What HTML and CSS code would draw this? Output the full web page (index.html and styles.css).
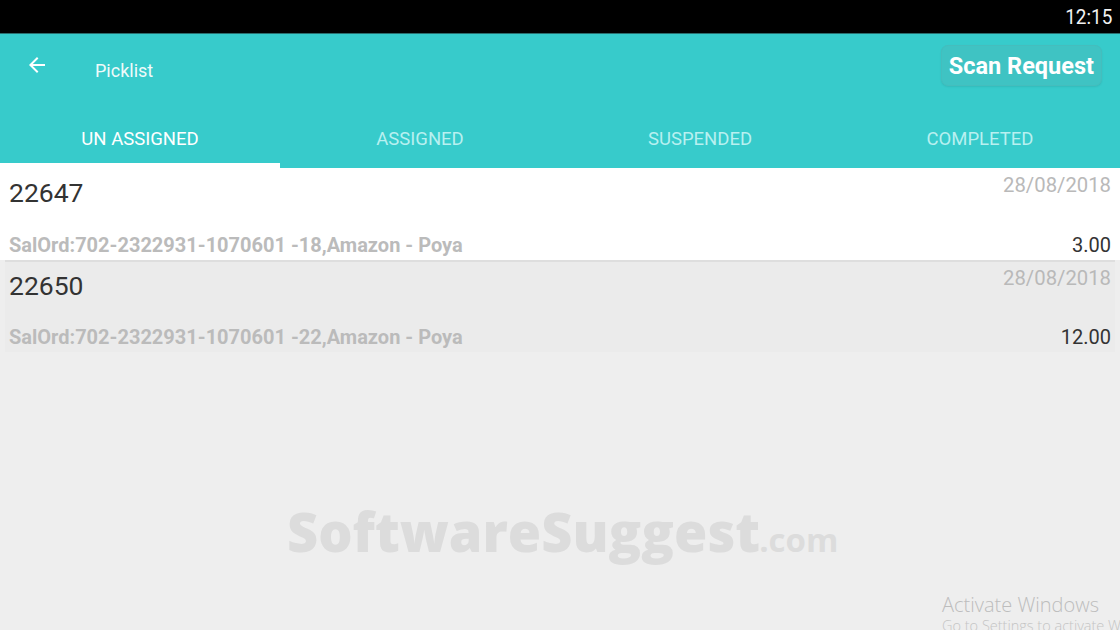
FILE: index.html
```html
<!DOCTYPE html>
<html>
<head>
<meta charset="utf-8">
<link rel="stylesheet" href="styles.css">
</head>
<body>
<div class="screen">
  <div class="statusbar"><span class="time">12:15</span></div>
  <div class="appbar">
    <div class="toolbar">
      <svg class="back" width="24" height="24" viewBox="0 0 24 24"><path d="M20 11H7.83l5.59-5.59L12 4l-8 8 8 8 1.41-1.41L7.83 13H20v-2z" fill="#fff"/></svg>
      <span class="title">Picklist</span>
      <span class="spacer"></span>
      <button class="scan">Scan Request</button>
    </div>
    <div class="tabs">
      <div class="tab active">UN ASSIGNED</div>
      <div class="tab">ASSIGNED</div>
      <div class="tab">SUSPENDED</div>
      <div class="tab">COMPLETED</div>
    </div>
  </div>
  <div class="list">
    <div class="item first">
      <div class="row top"><span class="num">22647</span><span class="date">28/08/2018</span></div>
      <div class="row bottom"><span class="desc">SalOrd:702-2322931-1070601 -18,Amazon - Poya</span><span class="qty">3.00</span></div>
    </div>
    <div class="item second">
      <div class="row top"><span class="num">22650</span><span class="date">28/08/2018</span></div>
      <div class="row bottom"><span class="desc">SalOrd:702-2322931-1070601 -22,Amazon - Poya</span><span class="qty">12.00</span></div>
    </div>
  </div>
  <div class="watermark">SoftwareSuggest<span class="com">.com</span></div>
  <div class="activate">
    <div class="a1">Activate Windows</div>
    <div class="a2">Go to Settings to activate Windows.</div>
  </div>
</div>
</body>
</html>
```
FILE: styles.css
```css
* { box-sizing: border-box; }
html, body { margin: 0; padding: 0; }
body { background: #eeeeee; font-family: Roboto, "Noto Sans", sans-serif; }
.screen { position: relative; width: 1120px; height: 630px; overflow: hidden; background: #eeeeee; }
.statusbar { height: 34px; background: #000; display: flex; justify-content: flex-end; align-items: center; padding-right: 8px; border-bottom: 1px solid #2a6f6f; }
.time { color: #f2f2f2; font-size: 21px; font-family: Roboto, sans-serif; transform: scaleX(0.9); transform-origin: right center; display: inline-block; margin-top: 1px; }
.appbar { background: #37cbcb; height: 134px; display: flex; flex-direction: column; }
.toolbar { height: 68px; display: flex; align-items: flex-start; padding: 0 18px 0 25px; }
.back { margin-top: 19px; }
.title { color: #effafa; font-size: 18px; margin-left: 46px; margin-top: 26px; }
.spacer { flex: 1; }
.scan { margin-top: 11px; height: 41px; padding: 0 7px; background: #3fc3c3; border: 1px solid #45bdbd; border-radius: 7px; color: #fff; font-family: Roboto, sans-serif; font-weight: 700; font-size: 23.5px; box-shadow: 0 1px 2px rgba(0,0,0,0.08); }
.tabs { flex: 1; display: grid; grid-template-columns: repeat(4, 1fr); }
.tab { display: flex; justify-content: center; align-items: flex-start; padding-top: 26px; font-size: 18.5px; color: #b8f0f0; border-bottom: 5px solid transparent; }
.tab.active { color: #fff; border-bottom-color: #fff; }
.list { display: flex; flex-direction: column; }
.item { height: 92px; display: flex; flex-direction: column; justify-content: space-between; }
.item.first { background: #fff; padding: 9px 9px 3px 9px; }
.item.second { background: #ebebeb; margin: 0 5px; padding: 8px 4px 3px 4px; border-top: 2px solid #dedede; height: 92px; }
.row { display: flex; justify-content: space-between; align-items: baseline; }
.num { font-size: 26.5px; color: #333; }
.date { font-size: 20.3px; color: #b9b9b9; margin-top: -4px; align-self: flex-start; }
.desc { font-size: 20px; color: #bbbbbb; font-weight: 700; }
.qty { font-size: 20px; color: #333; }
.watermark { position: absolute; left: 287px; top: 494px; font-family: "Open Sans", sans-serif; font-weight: 800; font-size: 54px; color: #dcdcdc; letter-spacing: 0; }
.watermark .com { font-size: 33px; font-weight: 700; letter-spacing: 0; margin-left: -1px; }
.activate { position: absolute; left: 942px; top: 591px; color: #c4c4c4; font-family: "Open Sans", sans-serif; white-space: nowrap; }
.a1 { font-size: 20px; font-weight: 300; color: #bdbdbd; }
.a2 { font-size: 14.5px; font-weight: 300; margin-top: -2px; }
```
